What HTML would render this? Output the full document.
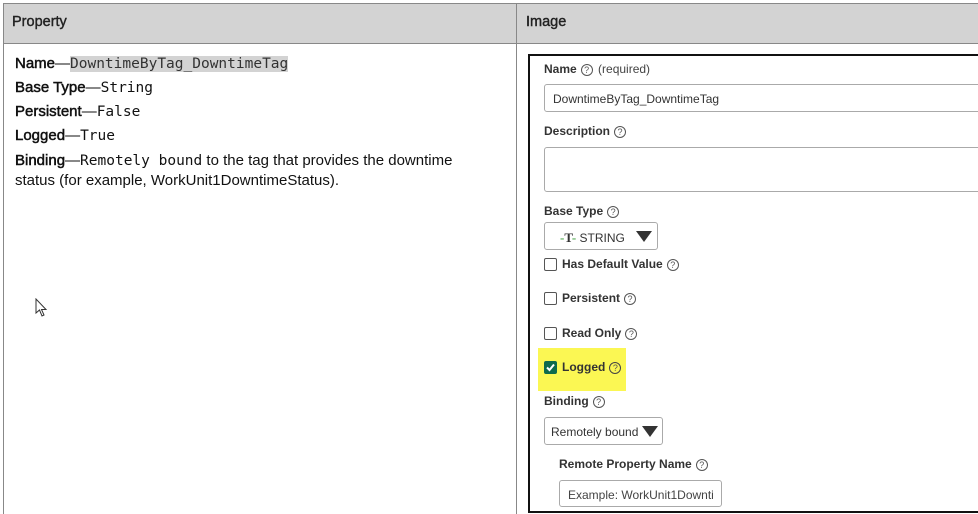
<!DOCTYPE html>
<html><head><style>
*{box-sizing:border-box;margin:0;padding:0}
body{width:978px;height:514px;overflow:hidden;background:#fff;font-family:"Liberation Sans",sans-serif;position:relative}
.a{position:absolute}
.hdr{top:3px;height:41px;background:#d3d3d3;border-top:1px solid #888;border-bottom:1px solid #888}
.ht{font-size:14.5px;color:#222;top:14px;-webkit-text-stroke:.4px #222}
.l{font-size:15px;color:#111;left:15px}
.l b{font-weight:normal;-webkit-text-stroke:.5px #111}
.m{font-family:"DejaVu Sans Mono",monospace;font-size:14.5px}
.lab{font-size:12px;font-weight:bold;color:#333}
.q{display:inline-block;width:12px;height:12px;border:1px solid #555;border-radius:50%;font-size:9px;text-align:center;line-height:10px;font-weight:normal;color:#555;vertical-align:0px;margin-left:4px}
.box{border:1px solid #aaa;border-radius:3px;background:#fff}
.cb{width:13px;height:13px;border:1px solid #555;border-radius:2px;background:#fff}
.tri{width:0;height:0;border-left:8px solid transparent;border-right:8px solid transparent;border-top:11px solid #333}
</style></head><body>
<div class="a hdr" style="left:3px;width:975px;border-left:1px solid #888"></div>
<div class="a" style="left:3px;top:3px;width:1px;height:511px;background:#888"></div>
<div class="a" style="left:516px;top:3px;width:1px;height:511px;background:#888"></div>
<div class="a ht" style="left:12px">Property</div>
<div class="a ht" style="left:526px">Image</div>

<div class="a l" style="top:55px"><b>Name</b>—<span class="m" style="background:#d3d3d3;color:#333">DowntimeByTag_DowntimeTag</span></div>
<div class="a l" style="top:79px"><b>Base Type</b>—<span class="m">String</span></div>
<div class="a l" style="top:103px"><b>Persistent</b>—<span class="m">False</span></div>
<div class="a l" style="top:127px"><b>Logged</b>—<span class="m">True</span></div>
<div class="a l" style="top:151px;width:460px;line-height:19px"><b>Binding</b>—<span class="m">Remotely bound</span> to the tag that provides the downtime status (for example, WorkUnit1DowntimeStatus).</div>
<svg class="a" style="left:35px;top:298px" width="14" height="20"><path d="M1 1 L1 15 L4.5 12 L7 18 L9 17 L6.5 11.5 L11 11.5 Z" fill="#fff" stroke="#333" stroke-width="1"/></svg>

<div class="a" style="left:528px;top:54px;width:460px;height:459px;border:2px solid #111"></div>
<div class="a lab" style="left:544px;top:62px">Name<span class="q">?</span> <span style="font-weight:normal;color:#444;margin-left:2px">(required)</span></div>
<div class="a box" style="left:544px;top:84px;width:450px;height:28px;font-size:12px;color:#333;padding:7px 8px">DowntimeByTag_DowntimeTag</div>
<div class="a lab" style="left:544px;top:124px">Description<span class="q">?</span></div>
<div class="a box" style="left:544px;top:147px;width:450px;height:45px"></div>
<div class="a lab" style="left:544px;top:204px">Base Type<span class="q">?</span></div>
<div class="a box" style="left:544px;top:222px;width:114px;height:28px;font-size:12px;color:#333;padding:7px 0 0 15px"><span style="color:#5a5;font-family:'Liberation Serif',serif;font-weight:bold;font-size:13px">-<span style="color:#333">T</span>-</span> STRING</div>
<div class="a tri" style="left:636px;top:231px"></div>
<div class="a cb" style="left:544px;top:258px"></div>
<div class="a lab" style="left:562px;top:257px">Has Default Value<span class="q">?</span></div>
<div class="a cb" style="left:544px;top:292px"></div>
<div class="a lab" style="left:562px;top:291px">Persistent<span class="q">?</span></div>
<div class="a cb" style="left:544px;top:327px"></div>
<div class="a lab" style="left:562px;top:326px">Read Only<span class="q">?</span></div>
<div class="a" style="left:538px;top:348px;width:88px;height:43px;background:#fbf753"></div>
<div class="a cb" style="left:544px;top:361px;background:#0e6b4c;border-color:#0e6b4c"><svg width="11" height="11" style="display:block"><path d="M2 5.5 L4.5 8 L9 2.5" stroke="#fff" stroke-width="2" fill="none"/></svg></div>
<div class="a lab" style="left:562px;top:360px">Logged<span class="q" style="border-color:#444">?</span></div>
<div class="a lab" style="left:544px;top:394px">Binding<span class="q">?</span></div>
<div class="a box" style="left:544px;top:417px;width:119px;height:28px;font-size:12px;color:#333;padding:7px 0 0 6px">Remotely bound</div>
<div class="a tri" style="left:642px;top:426px"></div>
<div class="a lab" style="left:559px;top:457px">Remote Property Name<span class="q">?</span></div>
<div class="a box" style="left:559px;top:480px;width:163px;height:27px;font-size:12px;color:#444;padding:7px 0 0 8px">Example: WorkUnit1Downti</div>
</body></html>
